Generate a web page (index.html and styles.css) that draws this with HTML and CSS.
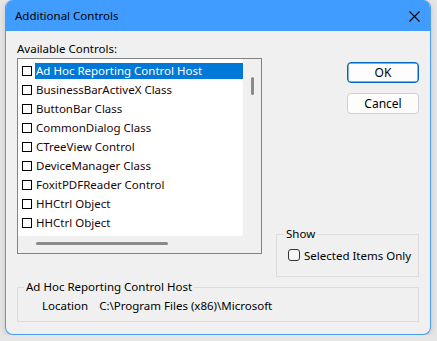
FILE: index.html
```html
<!DOCTYPE html>
<html lang="en">
<head>
    <meta charset="UTF-8">
    <title>Additional Controls</title>
    <link rel="stylesheet" href="styles.css">
</head>
<body>

<div class="dialog">
    <div class="titlebar">
        <span class="title">Additional Controls</span>
        <svg class="close" width="11" height="11" viewBox="0 0 11 11">
            <path d="M0.5 0.5 L10.5 10.5 M10.5 0.5 L0.5 10.5" stroke="#000" stroke-width="1.1" fill="none"/>
        </svg>
    </div>

    <div class="content">
        <div class="main">
            <div class="left">
                <div class="label">Available Controls:</div>
                <div class="listbox">
                    <ul class="items">
                        <li><span class="check"></span><span class="name selected">Ad Hoc Reporting Control Host</span></li>
                        <li><span class="check"></span><span class="name">BusinessBarActiveX Class</span></li>
                        <li><span class="check"></span><span class="name">ButtonBar Class</span></li>
                        <li><span class="check"></span><span class="name">CommonDialog Class</span></li>
                        <li><span class="check"></span><span class="name">CTreeView Control</span></li>
                        <li><span class="check"></span><span class="name">DeviceManager Class</span></li>
                        <li><span class="check"></span><span class="name">FoxitPDFReader Control</span></li>
                        <li><span class="check"></span><span class="name">HHCtrl Object</span></li>
                        <li><span class="check"></span><span class="name">HHCtrl Object</span></li>
                    </ul>
                    <div class="vscroll"><div class="vthumb"></div></div>
                    <div class="hscroll"><div class="hthumb"></div></div>
                    <div class="corner"></div>
                </div>
            </div>

            <div class="right">
                <button class="btn default">OK</button>
                <button class="btn">Cancel</button>

                <fieldset class="group show-group">
                    <legend>Show</legend>
                    <label class="option"><span class="box"></span>Selected Items Only</label>
                </fieldset>
            </div>
        </div>

        <fieldset class="group info-group">
            <legend>Ad Hoc Reporting Control Host</legend>
            <div class="info-row">
                <span class="info-key">Location</span>
                <span>C:\Program Files (x86)\Microsoft</span>
            </div>
        </fieldset>
    </div>
</div>

</body>
</html>
```

FILE: styles.css
```css
body {
    margin: 0;
    background-color: #e6e6e6;
    font-family: "Noto Sans", "Open Sans", sans-serif;
    font-size: 11.5px;
    color: #000;
}
.dialog {
    margin-left: 5px;
    width: 426px;
    height: 335px;
    box-sizing: border-box;
    border: 1px solid #4a9cf2;
    border-top: none;
    border-radius: 8px;
    overflow: hidden;
    background-color: #f0f0f0;
    box-shadow: 0 2px 6px rgba(0, 0, 0, 0.15);
}
.titlebar {
    height: 31px;
    background-color: #409cff;
    display: flex;
    align-items: center;
    justify-content: space-between;
    padding: 0 10px 0 9px;
}
.title {
    font-size: 11.5px;
}
.close {
    display: block;
    margin-top: 1px;
}
.content {
    padding-left: 11px;
}
.main {
    display: flex;
    gap: 14px;
    height: 246px;
}
.label {
    margin-top: 10px;
    height: 16px;
    line-height: 16px;
}
.listbox {
    margin-top: 1px;
    width: 245px;
    height: 196px;
    box-sizing: border-box;
    border: 1px solid #838383;
    display: grid;
    grid-template-columns: 1fr 18px;
    grid-template-rows: 1fr 17px;
}
.items {
    list-style: none;
    margin: 0;
    padding: 2px 0 0 4px;
    background-color: #fff;
    border-bottom-right-radius: 3px;
    overflow: hidden;
}
.items li {
    display: flex;
    align-items: center;
    height: 19px;
    white-space: nowrap;
}
.check {
    width: 10px;
    height: 10px;
    box-sizing: border-box;
    border: 1px solid #000;
    margin-right: 3px;
    flex-shrink: 0;
}
.name {
    flex: 1;
    height: 16px;
    line-height: 16px;
    padding-left: 1px;
    color: #1c0505;
}
.name.selected {
    background-color: #0078d7;
    color: #fff;
}
.vscroll {
    position: relative;
    background-color: #f0f0f0;
}
.vthumb {
    position: absolute;
    left: 8px;
    top: 18px;
    width: 3px;
    height: 18px;
    border-radius: 2px;
    background-color: #8a8a8a;
}
.hscroll {
    position: relative;
    background-color: #f0f0f0;
}
.hthumb {
    position: absolute;
    left: 18px;
    top: 6px;
    width: 132px;
    height: 3px;
    border-radius: 2px;
    background-color: #8a8a8a;
}
.corner {
    background-color: #f0f0f0;
}
.right {
    width: 143px;
    display: flex;
    flex-direction: column;
}
.btn {
    align-self: flex-end;
    width: 72px;
    height: 21px;
    padding: 0;
    font-family: inherit;
    font-size: 12px;
    background-color: #fdfdfd;
    border: 1px solid #d0d0d0;
    border-radius: 4px;
    margin-top: 10px;
}
.btn.default {
    margin-top: 31px;
    border-color: #0067c0;
    box-shadow: inset 0 0 0 0.5px #0067c0;
}
.group {
    margin: 0;
    padding: 0;
    min-width: 0;
    border: 1px solid #dcdcdc;
    box-sizing: border-box;
}
.group legend {
    padding: 0 2px;
    line-height: 14px;
    height: 14px;
}
.show-group {
    margin-top: auto;
    width: 143px;
    padding-top: 6px;
    padding-bottom: 13px;
}
.show-group legend {
    margin-left: 7px;
}
.option {
    display: flex;
    align-items: center;
    height: 16px;
    gap: 4px;
    padding-left: 11px;
    white-space: nowrap;
}
.box {
    width: 12px;
    height: 12px;
    box-sizing: border-box;
    border: 1px solid #333;
    border-radius: 3px;
    background-color: #f6f6f6;
}
.info-group {
    margin-top: 3px;
    width: 402px;
    padding-top: 4px;
    padding-bottom: 7px;
}
.info-group legend {
    margin-left: 6px;
}
.info-row {
    display: flex;
    gap: 11px;
    height: 16px;
    line-height: 16px;
    padding-left: 24px;
    white-space: nowrap;
}
```
